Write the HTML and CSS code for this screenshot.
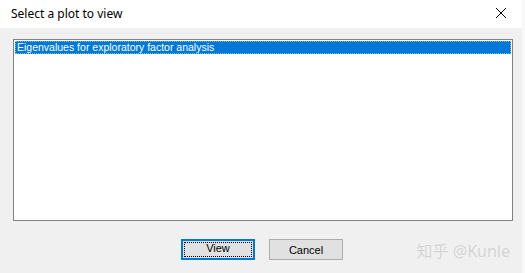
FILE: index.html
```html
<!DOCTYPE html>
<html>
<head>
<meta charset="utf-8">
<title>Select a plot to view</title>
<link rel="stylesheet" href="styles.css">
</head>
<body>
	<div class="dialog">
		<header class="titlebar">
			<span class="title">Select a plot to view</span>
			<span class="close">
				<svg width="12" height="12" viewBox="0 0 12 12"><path d="M1 1L11 11M11 1L1 11" stroke="#000" stroke-width="1" fill="none"/></svg>
			</span>
		</header>
		<main class="content">
			<div class="listbox">
				<div class="item selected">Eigenvalues for exploratory factor analysis</div>
			</div>
			<div class="buttons">
				<button class="btn default"><span>View</span></button>
				<button class="btn">Cancel</button>
				<span class="watermark">知乎 @Kunle</span>
			</div>
		</main>
	</div>
</body>
</html>
```
FILE: styles.css
```css
html, body {
  margin: 0;
  padding: 0;
}

body {
  width: 525px;
  height: 273px;
  overflow: hidden;
  background-color: #f0f0f0;
}

.dialog {
  display: flex;
  flex-direction: column;
  height: 273px;
  border-right: 3px solid #f8f8f8;
  box-sizing: border-box;
}

/* || title bar */

.titlebar {
  height: 28px;
  background-color: white;
  display: flex;
  align-items: center;
  justify-content: space-between;
  padding: 0 15px 0 11px;
}

.title {
  font-family: "Noto Sans", sans-serif;
  font-size: 12px;
  color: #000;
  margin-top: -2px;
}

.close {
  display: flex;
  margin-top: -3px;
}

/* || content */

.content {
  flex: 1;
  display: flex;
  flex-direction: column;
  padding: 11px 10px 0 13px;
}

.listbox {
  width: 500px;
  height: 182px;
  box-sizing: border-box;
  background-color: white;
  border: 1px solid #828282;
  padding: 1px 1px;
}

.item {
  font-family: "Liberation Sans", Arial, sans-serif;
  font-size: 10.5px;
  height: 13px;
  line-height: 13px;
  padding-left: 2px;
  color: #000;
}

.item.selected {
  background-color: #0078d7;
  color: white;
  outline: 1px dotted #7fb8e8;
  outline-offset: -1px;
}

.buttons {
  display: flex;
  align-items: center;
  margin-top: 18px;
  height: 21px;
}

.btn {
  font-family: "Liberation Sans", Arial, sans-serif;
  font-size: 11px;
  width: 74px;
  height: 21px;
  box-sizing: border-box;
  background-color: #e1e1e1;
  border: 1px solid #adadad;
  color: #000;
  padding: 0;
  margin: 0;
}

.btn.default {
  margin-left: 168px;
  border: 2px solid #0078d7;
  padding: 1px;
}

.btn.default span {
  display: block;
  height: 100%;
  line-height: 13px;
  outline: 1px dotted #000;
  outline-offset: -1px;
}

.btn + .btn {
  margin-left: 14px;
}

.watermark {
  margin-left: auto;
  margin-right: 2px;
  font-family: "Noto Sans", "Noto Sans CJK SC", sans-serif;
  font-size: 16px;
  color: #d2d2d2;
  text-shadow: 0 0 1px #fff;
}
```
